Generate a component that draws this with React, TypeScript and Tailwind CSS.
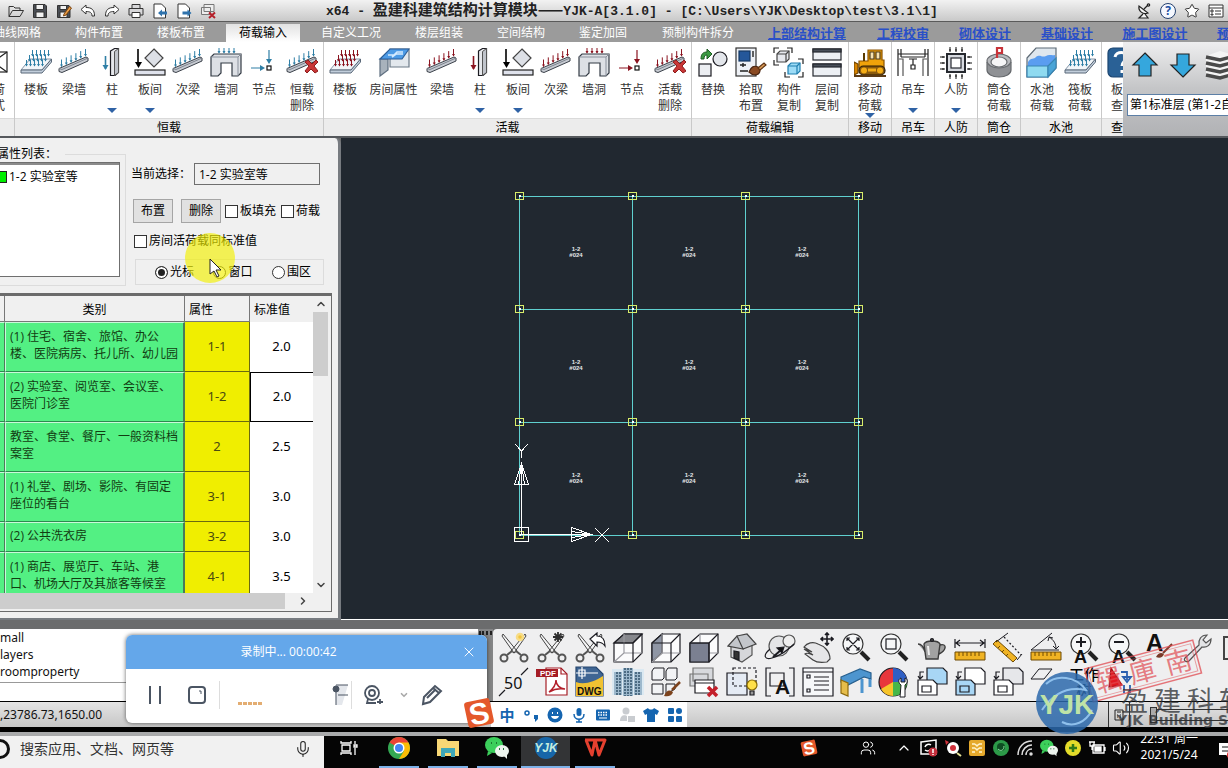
import { useState } from "react";
import type { ReactNode } from "react";
import { ChevronDown, ChevronRight, ChevronUp, Mic, Star, Volume2, Users, X } from "lucide-react";

const TEAL = "#2f7fa6";
const DARK_RED = "#8b1420";

/* ---------- shared drawing helpers ---------- */

function Svg({ children, size = "w-8 h-8" }: { children: ReactNode; size?: string }) {
  return (
    <svg viewBox="0 0 32 32" className={`${size} shrink-0`} fill="none" stroke="#1c1c22" strokeWidth="1.2" aria-hidden="true">
      {children}
    </svg>
  );
}

function Arrow({ x, y, len = 8, color }: { x: number; y: number; len?: number; color: string }) {
  return (
    <>
      <path d={`M${x} ${y}v${len}`} stroke={color} strokeWidth="1" />
      <path d={`M${x - 1.5} ${y + len - 2}h3l-1.5 2.5z`} fill={color} stroke="none" />
    </>
  );
}

/* ---------- ribbon icons ---------- */

const SlabIcon = ({ color = TEAL }: { color?: string }) => (
  <Svg>
    <path d="M1 23 10 12h21.500L22 23z" fill="#f1f5f9" stroke="#8796a8" strokeWidth="1" />
    <path d="M1 23v3h21l9.500-11v-3L22 23z" fill="#c2cedb" stroke="#5a6878" strokeWidth="1" />
    {[0, 1, 2].map((r) =>
      [0, 1, 2, 3, 4].map((i) => <Arrow key={`${r}${i}`} x={6.5 + i * 4 + r * 3} y={13 - r * 5} len={6} color={color} />)
    )}
  </Svg>
);

const beamShape = (color: string) => (
  <>
    <path d="M1 21.500 28 10l2 1v3L4 25.500l-3-1z" fill="#c6cad1" stroke="#3c424b" strokeWidth="1" />
    <path d="M1 21.500l3 1L30 11" stroke="#7d848e" strokeWidth="1" />
    {[0, 1, 2, 3, 4, 5].map((i) => <Arrow key={i} x={3.5 + i * 4.8} y={12.5 - i * 2.1} len={7} color={color} />)}
  </>
);

const BeamIcon = ({ color = TEAL }: { color?: string }) => <Svg>{beamShape(color)}</Svg>;

const RedCross = () => (
  <path d="m19 15 3-2 4 4 4-4 2 2-4 4 4 5-3 2-4-4-4 4-2-2 4-5z" fill="#c83737" stroke="#8f1d1d" strokeWidth="1" />
);

const BeamDeleteIcon = ({ color = TEAL }: { color?: string }) => (
  <Svg>{beamShape(color)}<RedCross /></Svg>
);

const ColumnIcon = ({ color = TEAL }: { color?: string }) => (
  <Svg>
    <path d="M14.500 4l4-2.500h4v24l-3.500 3h-4.500z" fill="#e6e8ec" />
    <path d="M18.500 4.500l4-3v24l-4 3z" fill="#c0c4cb" stroke="#555" strokeWidth="1" />
    <path d="M9.500 9v13" stroke={color} strokeWidth="1.6" />
    <path d="M6.500 18h6l-3 5z" fill={color} stroke="none" />
  </Svg>
);

const PlateIcon = () => (
  <Svg>
    <path d="M4 2v14" stroke="#000" strokeWidth="1.6" />
    <path d="M1 15h7l-3.500 6z" fill="#000" stroke="none" />
    <path d="M20 2l9 9-9 9-9-9z" fill="#dde0e6" stroke="#444" />
    <rect x="1" y="23" width="30" height="5" fill="#dfe2ec" stroke="#222" />
  </Svg>
);

const WallHoleIcon = ({ color = TEAL }: { color?: string }) => (
  <Svg>
    <path d="M1 10l3-3h27v19l-3 3h-6V16H11v10l-3 3H1z" fill="#dde0e5" stroke="#333a44" />
    <path d="M1 10h27v19M28 10l3-3" stroke="#8a919c" strokeWidth="1" />
    {[0, 1, 2, 3].map((i) => <Arrow key={i} x={9 + i * 5} y={1} len={5} color={color} />)}
  </Svg>
);

const NodeIcon = ({ color = TEAL }: { color?: string }) => (
  <Svg>
    <path d="M21 3v12M3 21h11" stroke={color} />
    <path d="M18 12h6l-3 5zM12 18l5 3-5 3z" fill={color} stroke="none" />
    <rect x="19" y="19" width="4" height="4" stroke="#111" />
  </Svg>
);

const RoomPropIcon = () => (
  <Svg>
    <path d="M12 2h19v18H12z" fill="#e3e8ed" stroke="#6c7a88" />
    <path d="M2 12v17l8-6V12z" fill="#a8b2bc" stroke="#5f6f80" />
    <path d="M2 12 12 2h19l-7 10z" fill="#4d9be6" stroke="#2c5f99" />
    <path d="M10 8h6l3-3h6M14 10l4-3h7" stroke="#d5ebff" strokeWidth="1.6" />
  </Svg>
);

const ReplaceIcon = () => (
  <Svg>
    <rect x="2" y="17" width="12" height="12" fill="#eceef2" />
    <circle cx="23" cy="12" r="7" fill="#e3e6eb" />
    <path d="M4 12c0-5 2-7 6-7V2l5 5-5 5V8c-2 0-3 1-3 4z" fill="#3c9a42" stroke="#1e5c24" strokeWidth="1" />
  </Svg>
);

const PickIcon = () => (
  <Svg>
    <rect x="1" y="1" width="20" height="28" fill="#eef1f6" stroke="#333" />
    <rect x="4" y="4" width="11" height="10" fill="#24579a" stroke="#163863" />
    <path d="M18 4v6M5 18h6M8 16v4M5 24h8" stroke="#222" strokeWidth="1.4" />
    <path d="M14 25c2-5 5-7 9-5l2 3c0 5-6 7-11 2z" fill="#8a4a22" stroke="#4a2510" />
    <path d="M23 21l6-5 2 2-6 5z" fill="#d89a56" stroke="#5e3313" />
  </Svg>
);

const MemberCopyIcon = () => (
  <Svg>
    <path d="M1 6V1h5M14 1h5v5M1 13v5h5" stroke="#222" />
    <path d="M4 7l3-3h9v8l-3 3H4z" fill="#e7e9ee" stroke="#444" />
    <path d="M4 7h9v8M13 7l3-3" stroke="#444" />
    <path d="M12 25v5h5M25 30h5v-5M30 17v-5h-5" stroke="#222" />
    <path d="M15 19l3-3h9v8l-3 3h-9z" fill="#9ddcf7" stroke="#1f7fb0" />
    <path d="M15 19h9v8M24 19l3-3" stroke="#1f7fb0" />
  </Svg>
);

const FloorCopyIcon = () => (
  <Svg>
    <rect x="2" y="2" width="28" height="11" fill="#edf0f4" stroke="#26292f" />
    <rect x="2" y="2" width="28" height="3" fill="#4a505a" stroke="#26292f" />
    <rect x="2" y="17" width="28" height="12" fill="#edf0f4" stroke="#26292f" />
    <rect x="2" y="17" width="28" height="3" fill="#4a505a" stroke="#26292f" />
  </Svg>
);

const BulldozerIcon = () => (
  <Svg>
    <path d="M5 14h9V3h14v10h2v8H5z" fill="#f0a30a" stroke="#8a5300" />
    <path d="M16 5h4v7h-4zM22 5h4v7h-4z" fill="#f7e3b0" stroke="#4b3c22" />
    <path d="M0 15l4 2v9l-4 2z" fill="#d98500" stroke="#6f4300" />
    <rect x="5" y="19" width="26" height="9" rx="4.500" fill="#8a5a0c" stroke="#2a1c06" />
    <circle cx="10" cy="23.500" r="3" fill="#f4ad16" stroke="none" />
    <circle cx="26" cy="23.500" r="3" fill="#f4ad16" stroke="none" />
    <path d="M14 23h8" stroke="#f4ad16" strokeWidth="3" />
    <path d="M10 14V6" stroke="#5a3b00" strokeWidth="2" />
    <path d="M0 29h32" stroke="#5a3a14" strokeWidth="2" />
  </Svg>
);

const CraneIcon = () => (
  <Svg>
    <path d="M1 2v27M4 2v8M31 2v27M28 2v8M1 7h30M4 10h24" stroke="#222" />
    <path d="M2 12h4v17M30 12h-4v17" stroke="#555" />
    <path d="M12 12h8M16 12v6M14 18h4v4h-4z" stroke="#222" />
  </Svg>
);

const ShelterIcon = () => (
  <Svg>
    <rect x="7" y="7" width="18" height="18" fill="#d7dae0" stroke="#26292f" strokeWidth="2" />
    <rect x="11" y="11" width="10" height="10" fill="#fff" stroke="#26292f" />
    {[10, 16, 22].map((p) => (
      <g key={p} stroke="#111" strokeWidth="1">
        <path d={`M${p} 0v5M${p} 32v-5M0 ${p}h5M32 ${p}h-5`} />
        <path d={`M${p - 1} 3h2M${p - 1} 29h2M3 ${p - 1}v2M29 ${p - 1}v2`} />
      </g>
    ))}
  </Svg>
);

const SiloIcon = () => (
  <Svg>
    <path d="M4 15v8c0 4 5 7 12 7s12-3 12-7v-8" fill="#8f9195" stroke="#66696d" />
    <ellipse cx="16" cy="14" rx="12" ry="7" fill="#b9bbbf" stroke="#6a6d71" />
    <ellipse cx="16" cy="15" rx="8" ry="5" fill="#f6f6f7" stroke="#6a6d71" />
    <path d="M14 11V1h5v5h-5" stroke="#c8343a" strokeWidth="2.200" />
  </Svg>
);

const PoolIcon = () => (
  <Svg>
    <path d="M1 11l9-10h20v20l-8 9H1z" fill="#dfe7ee" stroke="#5d6a76" />
    <path d="M2 15c3-5 6-2 8-5 4-3 6 1 10-1 3-2 6 0 9-1v10l-7 9H2z" fill="#5a9df0" stroke="none" />
    <path d="M1 19h21v11H1z" fill="#8fdaf0" stroke="#3986b4" />
    <path d="M22 19l8-8v10l-8 9z" fill="#4aa4d6" stroke="#3986b4" />
  </Svg>
);

const HelpTileIcon = () => (
  <Svg>
    <rect x="1" y="1" width="30" height="29" rx="5" fill="#2a6196" stroke="#1b4570" />
    <path d="M8 10c1-6 12-6 12 0 0 4-5 4-5 9M15 23v3" stroke="#fff" strokeWidth="3" />
  </Svg>
);

const ModeIcon = () => (
  <Svg>
    <rect x="2" y="5" width="28" height="20" fill="#fff" stroke="#222" />
    <path d="M2 5l28 20M30 5 2 25" stroke="#222" />
  </Svg>
);

/* ---------- ribbon data ---------- */

interface Tool {
  label: string[];
  icon: ReactNode;
  menu?: boolean;
  wide?: boolean;
}

interface ToolGroup {
  title: string;
  tools: Tool[];
}

const GROUPS: ToolGroup[] = [
  { title: "", tools: [{ label: ["显荷", "模式"], icon: <ModeIcon /> }] },
  {
    title: "恒载",
    tools: [
      { label: ["楼板"], icon: <SlabIcon /> },
      { label: ["梁墙"], icon: <BeamIcon /> },
      { label: ["柱"], icon: <ColumnIcon />, menu: true },
      { label: ["板间"], icon: <PlateIcon />, menu: true },
      { label: ["次梁"], icon: <BeamIcon /> },
      { label: ["墙洞"], icon: <WallHoleIcon /> },
      { label: ["节点"], icon: <NodeIcon /> },
      { label: ["恒载", "删除"], icon: <BeamDeleteIcon /> },
    ],
  },
  {
    title: "活载",
    tools: [
      { label: ["楼板"], icon: <SlabIcon color={DARK_RED} /> },
      { label: ["房间属性"], icon: <RoomPropIcon />, wide: true },
      { label: ["梁墙"], icon: <BeamIcon color={DARK_RED} /> },
      { label: ["柱"], icon: <ColumnIcon color={DARK_RED} />, menu: true },
      { label: ["板间"], icon: <PlateIcon />, menu: true },
      { label: ["次梁"], icon: <BeamIcon color={DARK_RED} /> },
      { label: ["墙洞"], icon: <WallHoleIcon color={DARK_RED} /> },
      { label: ["节点"], icon: <NodeIcon color={DARK_RED} /> },
      { label: ["活载", "删除"], icon: <BeamDeleteIcon color={DARK_RED} /> },
    ],
  },
  {
    title: "荷载编辑",
    tools: [
      { label: ["替换"], icon: <ReplaceIcon /> },
      { label: ["拾取", "布置"], icon: <PickIcon /> },
      { label: ["构件", "复制"], icon: <MemberCopyIcon /> },
      { label: ["层间", "复制"], icon: <FloorCopyIcon /> },
    ],
  },
  { title: "移动", tools: [{ label: ["移动", "荷载"], icon: <BulldozerIcon />, menu: true }] },
  { title: "吊车", tools: [{ label: ["吊车"], icon: <CraneIcon />, menu: true }] },
  { title: "人防", tools: [{ label: ["人防"], icon: <ShelterIcon />, menu: true }] },
  { title: "筒仓", tools: [{ label: ["筒仓", "荷载"], icon: <SiloIcon /> }] },
  {
    title: "水池",
    tools: [
      { label: ["水池", "荷载"], icon: <PoolIcon /> },
      { label: ["筏板", "荷载"], icon: <SlabIcon /> },
    ],
  },
  { title: "查询", tools: [{ label: ["板荷", "查询"], icon: <HelpTileIcon /> }] },
];

const TABS = [
  { name: "轴线网格", width: "w-[82px]" },
  { name: "构件布置", width: "w-[82px]" },
  { name: "楼板布置", width: "w-[82px]" },
  { name: "荷载输入", width: "w-[82px]" },
  { name: "自定义工况", width: "w-[94px]" },
  { name: "楼层组装", width: "w-[82px]" },
  { name: "空间结构", width: "w-[82px]" },
  { name: "鉴定加固", width: "w-[82px]" },
  { name: "预制构件拆分", width: "w-[108px]" },
];

const MODULE_LINKS = [
  { name: "上部结构计算", width: "w-[110px]" },
  { name: "工程校审", width: "w-[82px]" },
  { name: "砌体设计", width: "w-[82px]" },
  { name: "基础设计", width: "w-[82px]" },
  { name: "施工图设计", width: "w-[94px]" },
  { name: "预制设计", width: "w-[82px]" },
];

/* ---------- title bar ---------- */

const QUICK: { name: string; icon: ReactNode }[] = [
  { name: "打开", icon: <path d="M2 27V7h9l3 3h10v5M2 27l7-12h22l-7 12z" /> },
  { name: "保存", icon: <><path d="M3 3h23l3 3v23H3z" fill="#4a4e55" /><path d="M8 3h15v10H8zM8 18h16v11H8z" fill="#f2f2f2" /></> },
  { name: "另存为", icon: <><path d="M3 5h23l2 3v21H3z" fill="#4a4e55" /><path d="M8 5h13v8H8zM8 18h14v11H8z" fill="#f2f2f2" /><path d="m16 22 11-15 4 3-11 14-5 2z" fill="#eba04a" stroke="#7c430d" /></> },
  { name: "撤销", icon: <path d="M2 13 12 4v5c11 0 17 4 17 17h-5c0-7-4-9-12-9v5z" fill="#fff" /> },
  { name: "重做", icon: <path d="M30 13 20 4v5C9 9 3 13 3 26h5c0-7 4-9 12-9v5z" fill="#fff" /> },
  { name: "打印", icon: <><path d="M8 11V3h16v8M2 11h28v13H2z" fill="#d8d8da" /><path d="M8 19h16v10H8z" fill="#fff" /></> },
  { name: "导入", icon: <><path d="M4 2h15l8 8v20H4z" fill="#fff" /><path d="m12 20 8-7v4h10v6H20v4z" fill="#2f73ad" stroke="none" /></> },
  { name: "导出", icon: <><path d="M4 2h15l8 8v20H4z" fill="#fff" /><path d="m31 20-8-7v4H13v6h10v4z" fill="#2f73ad" stroke="none" /></> },
  { name: "关闭", icon: <><path d="M8 3h20v14H8zM3 9h18v14H3z" fill="#eee" stroke="#777" /><path d="m18 19 12 11M30 19 18 30" stroke="#b5202a" strokeWidth="4" /></> },
];

function TitleBar() {
  return (
    <header className="flex h-[22px] shrink-0 items-center border-b border-[#5a5a5a] bg-linear-to-b from-[#f2f2f2] to-[#c9c9c9] pl-1">
      <div className="flex w-[322px] shrink-0">
        {QUICK.map((q) => (
          <button key={q.name} aria-label={q.name} className="flex w-6 items-center justify-center">
            <svg viewBox="0 0 32 32" className="h-4 w-4" fill="none" stroke="#333" strokeWidth="2">{q.icon}</svg>
          </button>
        ))}
      </div>
      <h1 className="flex-1 whitespace-nowrap font-['Liberation_Mono','Noto_Sans_CJK_SC',monospace] text-[13px] font-bold leading-5 text-[#222]">
        x64 - <span className="font-['Noto_Sans_CJK_SC',sans-serif] text-[15px] leading-5">盈建科建筑结构计算模块——</span>YJK-A[3.1.0] - [C:\Users\YJK\Desktop\test\3.1\1]
      </h1>
      <div className="flex shrink-0 gap-2 pr-1">
        <button aria-label="通讯">
          <svg viewBox="0 0 16 16" className="h-4 w-4" fill="none" stroke="#222" strokeWidth="1.200">
            <path d="M3 3c-1 5 4 9 9 7zM8 6l4-4M13 1.500v0M7 11l-4 4h9l-3-4" fill="#f5f5f5" /><circle cx="12.500" cy="2" r="1.200" />
          </svg>
        </button>
        <button aria-label="帮助" className="flex h-4 w-4 items-center justify-center rounded-full border border-[#24406e] bg-[#f5f8ff] text-xs font-bold text-[#1d4fa3]">?</button>
        <button aria-label="收藏"><Star className="h-4 w-4 fill-white text-[#333]" strokeWidth={1.5} /></button>
        <button aria-label="面板">
          <svg viewBox="0 0 16 16" className="h-4 w-4" fill="#fff" stroke="#333">
            <path d="M1 2h14v12H1zM1 5h14" /><path d="M3 7h2v2H3zM3 11h2v1H3zM7 8h6M7 11h6" />
          </svg>
        </button>
      </div>
    </header>
  );
}

/* ---------- ribbon ---------- */

function RibbonTool({ tool }: { tool: Tool }) {
  return (
    <button className={`flex shrink-0 flex-col items-center text-xs leading-4 text-[#333] ${tool.wide ? "w-[59px]" : "w-[38px]"}`}>
      {tool.icon}
      <span className="mt-[3px] whitespace-nowrap">{tool.label[0]}</span>
      {tool.label[1] && <span className="whitespace-nowrap">{tool.label[1]}</span>}
      {tool.menu && (
        <svg viewBox="0 0 10 5" className={tool.label[1] ? "-mt-px h-[5px] w-[10px] shrink-0" : "mt-[10px] h-[5px] w-[10px] shrink-0"}>
          <path d="M0 0h10L5 5z" fill="#2f62a5" />
        </svg>
      )}
    </button>
  );
}

function Ribbon() {
  const [active, setActive] = useState("荷载输入");

  return (
    <>
      <nav className="flex h-5 shrink-0 items-end overflow-hidden bg-[#9b9b9b] text-xs">
        <div className="-ml-6 flex shrink-0 items-end">
          {TABS.map((t) => (
            <div key={t.name} className={`flex shrink-0 justify-center ${t.width}`}>
              <button
                onClick={() => setActive(t.name)}
                className={`h-[18px] whitespace-nowrap px-[13px] leading-[18px] ${
                  active === t.name ? "bg-linear-to-b from-[#e2e2e2] to-white text-black" : "text-white"
                }`}
              >
                {t.name}
              </button>
            </div>
          ))}
          {MODULE_LINKS.map((m) => (
            <div key={m.name} className={`flex shrink-0 justify-center ${m.width}`}>
              <a href="#" className="whitespace-nowrap text-[13px] font-bold leading-[18px] text-[#2a50c8] underline">{m.name}</a>
            </div>
          ))}
        </div>
      </nav>

      <div className="flex h-24 shrink-0 border-b-2 border-[#55585c] bg-white">
        <div className="flex min-w-0 flex-1 overflow-hidden">
          <div className="-ml-[28px] flex shrink-0">
            {GROUPS.map((g, i) => (
              <section key={i} className="flex shrink-0 flex-col border-r border-[#c9c9c9]">
                <div className="flex h-[76px] shrink-0 px-[2px] pt-[5px]">
                  {g.tools.map((t, k) => <RibbonTool key={k} tool={t} />)}
                </div>
                <h2 className="flex-1 border-t border-[#dadada] bg-[#ececec] text-center text-xs leading-[18px] text-black">{g.title}</h2>
              </section>
            ))}
          </div>
        </div>
        <div className="flex w-[105px] shrink-0 flex-col overflow-hidden bg-linear-to-b from-[#eeeeef] via-[#c4c5c7] to-[#b1b2b5] pl-1">
          <div className="flex h-[52px] shrink-0 items-center gap-[6px] pt-[-2px] pb-[6px] pl-[2px]">
            <button aria-label="上一层" className="shrink-0">
              <Svg><path d="m16 4 12 12h-6v11H10V16H4z" fill="#35a7dd" stroke="#222" /></Svg>
            </button>
            <button aria-label="下一层" className="shrink-0">
              <Svg><path d="m16 28 12-12h-6V5H10v11H4z" fill="#35a7dd" stroke="#222" /></Svg>
            </button>
            <button aria-label="全楼" className="shrink-0">
              <Svg>
                <path d="m1 7 14-5 14 4v22l-14 2-14-3z" fill="#f4f4f4" stroke="none" />
                <path d="m1 8 14 3 14-4M1 14l14 3 14-4M1 20l14 3 14-4M1 26l14 3 14-4" stroke="#4a4a4a" strokeWidth="3.500" />
              </Svg>
            </button>
          </div>
          <select aria-label="标准层" className="h-[22px] w-[170px] shrink-0 appearance-none border border-[#5c7fa6] bg-white px-[2px] text-xs text-black">
            <option>第1标准层 (第1-2自然层)</option>
          </select>
        </div>
      </div>
    </>
  );
}

/* ---------- property panel ---------- */

const ROWS = [
  { text: "(1) 住宅、宿舍、旅馆、办公\n楼、医院病房、托儿所、幼儿园", code: "1-1", value: "2.0" },
  { text: "(2) 实验室、阅览室、会议室、\n医院门诊室", code: "1-2", value: "2.0", selected: true },
  { text: "教室、食堂、餐厅、一般资料档\n案室", code: "2", value: "2.5" },
  { text: "(1) 礼堂、剧场、影院、有固定\n座位的看台", code: "3-1", value: "3.0" },
  { text: "(2) 公共洗衣房", code: "3-2", value: "3.0", short: true },
  { text: "(1) 商店、展览厅、车站、港\n口、机场大厅及其旅客等候室", code: "4-1", value: "3.5" },
];

const CHECK = "h-[13px] w-[13px] shrink-0 appearance-none border border-[#333] bg-white checked:bg-[#333]";
const RADIO =
  "h-[13px] w-[13px] shrink-0 appearance-none rounded-full border border-[#333] bg-white checked:bg-[#222] checked:shadow-[inset_0_0_0_2px_#fff]";

function PropertyPanel() {
  const [mode, setMode] = useState("光标");

  return (
    <aside className="relative flex w-[341px] shrink-0 flex-col rounded-tr-md border-r-[3px] border-b-2 border-[#777b80] bg-[#f0f0f0] text-xs text-black">
      <div className="flex h-[155px] shrink-0">
        <fieldset className="mt-2 mb-[7px] w-[126px] shrink-0 border border-l-0 border-[#dcdcdc] pr-[5px]">
          <legend className="-ml-[3px] pr-2 leading-4">属性列表：</legend>
          <div className="h-[115px] border border-l-0 border-[#6f6f6f] bg-white pt-[5px] shadow-[inset_0_2px_0_#8b8b8b]">
            <div className="flex items-center gap-[2px]">
              <span className="h-3 w-[7px] border border-l-0 border-[#222] bg-[#00ee00]" />
              <span className="leading-[18px]">1-2 实验室等</span>
            </div>
          </div>
        </fieldset>
        <div className="flex flex-1 flex-col pl-[5px]">
          <label className="mt-[25px] flex h-[22px] items-center gap-1">
            <span className="w-[59px] whitespace-nowrap">当前选择：</span>
            <input readOnly value="1-2 实验室等" className="h-[22px] w-[126px] border border-[#6f6f6f] bg-[#f0f0f0] px-1 text-xs" />
          </label>
          <div className="mt-[14px] flex h-6 items-center pl-[2px]">
            <button className="h-6 w-10 border border-[#a5a5a5] bg-[#e1e1e1]">布置</button>
            <button className="ml-2 h-6 w-10 border border-[#a5a5a5] bg-[#e1e1e1]">删除</button>
            <label className="ml-1 flex items-center gap-[2px]"><input type="checkbox" className={CHECK} />板填充</label>
            <label className="ml-[5px] flex items-center gap-[2px]"><input type="checkbox" className={CHECK} />荷载</label>
          </div>
          <label className="mt-2 flex h-5 items-center gap-[2px] pl-[3px]">
            <input type="checkbox" className={CHECK} />房间活荷载同标准值
          </label>
          <div className="mt-2 ml-1 flex h-[26px] w-[189px] items-center justify-between border border-[#dcdcdc] pr-3 pl-[19px]">
            {["光标", "窗口", "围区"].map((m) => (
              <label key={m} className="flex items-center gap-[2px]">
                <input type="radio" name="pick" checked={mode === m} onChange={() => setMode(m)} className={RADIO} />
                {m}
              </label>
            ))}
          </div>
        </div>
      </div>

      <div className="mr-[6px] mb-[6px] flex min-h-0 flex-1 flex-col border-t-[3px] border-r border-b border-[#6b6b6b] pr-[3px] pb-[2px]">
        <div className="flex min-h-0 flex-1">
          <div className="min-w-0 flex-1 overflow-hidden bg-white">
            <table className="w-[313px] table-fixed border-separate border-spacing-0">
              <colgroup>
                <col className="w-[5px]" />
                <col className="w-[180px]" />
                <col className="w-[65px]" />
                <col className="w-[63px]" />
              </colgroup>
              <thead>
                <tr className="h-[26px] bg-[#f0f0f0]">
                  <th className="border-r border-b border-[#777]" />
                  <th className="border-r border-b border-[#777] pt-[2px] font-normal">类别</th>
                  <th className="border-r border-b border-[#777] pt-[2px] pl-1 text-left font-normal">属性</th>
                  <th className="pt-[2px] pl-1 text-left font-normal">标准值</th>
                </tr>
              </thead>
              <tbody>
                {ROWS.map((r) => (
                  <tr key={r.code} className={r.short ? "h-[30px]" : "h-[50px]"}>
                    <td className="border-t border-r border-b border-t-[#c9f9d9] border-r-[#4b7a5a] border-b-[#2c8a50] bg-[#53f083]" />
                    <td className="border-t border-r-2 border-b border-l border-t-[#c9f9d9] border-r-[#4b7a5a] border-b-[#2c8a50] border-l-[#c9f9d9] bg-[#53f083] pb-1 pl-1 align-middle leading-[17px] whitespace-pre text-[#123c12]">
                      {r.text}
                    </td>
                    <td className="border-r border-b border-[#6b6a10] bg-[#f0ee00] text-center font-['Noto_Sans',sans-serif] text-[13px] text-[#4a4a10]">{r.code}</td>
                    <td className={`text-center font-['Noto_Sans',sans-serif] text-[13px] ${r.selected ? "border-t border-b border-l border-black" : ""}`}>
                      {r.value}
                    </td>
                  </tr>
                ))}
              </tbody>
            </table>
          </div>
          <div className="flex w-[15px] shrink-0 flex-col items-center bg-[#f0f0f0]">
            <ChevronUp className="my-[2px] h-3 w-3 text-[#444]" strokeWidth={3} />
            <div className="h-16 w-full bg-[#cdcdcd]" />
            <ChevronDown className="mt-auto mb-[2px] h-3 w-3 text-[#444]" strokeWidth={3} />
          </div>
        </div>
        <div className="flex h-4 shrink-0 items-center bg-[#f0f0f0]">
          <div className="h-full w-[285px] bg-[#cdcdcd]" />
          <ChevronRight className="ml-3 h-3 w-3 text-[#444]" strokeWidth={3} />
        </div>
      </div>

      {/* highlighted mouse pointer */}
      <div className="pointer-events-none absolute top-[95px] left-[185px] h-[50px] w-[50px] rounded-full bg-[#f2f000]/65" />
      <svg viewBox="0 0 14 20" className="pointer-events-none absolute top-[120px] left-[209px] h-5 w-[14px]">
        <path d="M1 1v15l4-3 3 6 2-1-3-6h5z" fill="#fff" stroke="#222" />
      </svg>
    </aside>
  );
}

/* ---------- drawing canvas ---------- */

const GRID_X = [178, 291, 404, 517];
const GRID_Y = [58, 171, 284, 397];

function ModelCanvas() {
  return (
    <main className="min-w-0 flex-1 overflow-hidden border-b border-white bg-[#212830]">
      <svg className="h-full w-full" fill="none" shapeRendering="crispEdges">
        {GRID_X.map((x) => <path key={x} d={`M${x + 0.5} 58v340`} stroke="#5fd0cf" />)}
        {GRID_Y.map((y) => <path key={y} d={`M178 ${y + 0.5}h340`} stroke="#5fd0cf" />)}
        {GRID_X.map((x) =>
          GRID_Y.map((y) => (
            <g key={`${x}-${y}`}>
              <rect x={x - 3.5} y={y - 3.5} width="8" height="7" stroke="#d8ec6a" />
              <rect x={x} y={y - 1} width="2" height="2" fill="#fff" />
            </g>
          ))
        )}
        {GRID_X.slice(0, 3).map((x) =>
          GRID_Y.slice(0, 3).map((y) => (
            <g key={`t${x}-${y}`} fill="#e3e6ea" fontFamily="Liberation Sans" fontWeight="700" textAnchor="middle">
              <text x={x + 57} y={y + 55} fontSize="6">1-2</text>
              <text x={x + 57} y={y + 61} fontSize="6">#024</text>
            </g>
          ))
        )}
        {/* axis marker */}
        <g stroke="#fff">
          <path d="M180.500 397V326M180 396.500h70" />
          <rect x="173.500" y="389.500" width="14" height="14" />
          <path d="M180.500 326 173.500 346.500h14zM180.500 326l-3 20M180.500 326l3 20" />
          <path d="M250.500 396.500 230.500 389.500v14zM250.500 396.500l-20-3M250.500 396.500l-20 3" />
          <path d="M174 306l6.500 7 6.500-7M180.500 313v7M254 390l14 14M268 390l-14 14" />
        </g>
      </svg>
    </main>
  );
}

/* ---------- bottom tool palette ---------- */

const scissors = (
  <>
    <path d="M5 2 4 4l12 17 3-2zM27 2l1 2-12 17-3-2z" fill="#f4f4f5" stroke="#444" strokeWidth="1" />
    <circle cx="6" cy="26" r="3.500" stroke="#555" strokeWidth="2" />
    <circle cx="26" cy="26" r="3.500" stroke="#555" strokeWidth="2" />
    <path d="m9 23 5-4M23 23l-5-4" stroke="#555" strokeWidth="2" />
  </>
);

const Box = ({ face }: { face: "top" | "left" | "front" }) => (
  <Svg>
    <path d="M2 11 12 2h18v19L21 30H2z" fill="#fbfbfc" />
    {face === "top" && <path d="M2 11 12 2h18l-9 9z" fill="#86878c" />}
    {face === "left" && <path d="M2 11 12 2v19L2 30z" fill="#8f96a5" />}
    <path d="M12 2v19L2 30M12 21h18" stroke="#9a9aa0" />
    {face === "front" && <path d="M2 11h19v19H2z" fill="#7b8091" />}
    <path d="M2 11h19v19M21 11l9-9" />
  </Svg>
);

const lens = (
  <>
    <circle cx="13" cy="12" r="10" fill="#f6f7f8" stroke="#333" />
    <path d="m21 20 8 8" stroke="#222" strokeWidth="4" />
  </>
);

const ruler = <path d="M1 20h30v8H1zM5 20v4M9 20v4M13 20v4M17 20v4M21 20v4M25 20v4" fill="#f0b323" stroke="#6e4b04" strokeWidth="1" />;

const sheets = (back: string, front: string) => (
  <>
    <path d="M11 2h16l4 4v12H11z" fill={back} />
    <path d="M2 14h15l4 4v11H2z" fill={front} />
    <path d="M6 20h9v6H6zM4 12V6h4M2 10l2 3 3-3" />
  </>
);

const ROW_ONE: { name: string; icon: ReactNode }[] = [
  { name: "显示剪切", icon: <Svg>{scissors}<circle cx="22" cy="5" r="3" fill="#f2c53a" stroke="#f7dc86" strokeWidth="2.500" /></Svg> },
  { name: "隐藏剪切", icon: <Svg>{scissors}<path d="M22 0v10M17 5h10M18.500 1.500l7 7M25.500 1.500l-7 7" stroke="#2d2d2d" strokeWidth="1.800" /></Svg> },
  { name: "恢复剪切", icon: <Svg>{scissors}<path d="m16 7 7-6v3c5 0 8 3 8 10-2-3-4-4-8-4v4z" fill="#fff" /></Svg> },
  { name: "俯视图", icon: <Box face="top" /> },
  { name: "左视图", icon: <Box face="left" /> },
  { name: "前视图", icon: <Box face="front" /> },
  { name: "轴测图", icon: <Svg><path d="M5 15v10l11 5 10-7V12" fill="#d6d7da" stroke="#555" /><path d="M2 14 11 4l6 13zM11 4l10-2 9 10-13 5z" fill="#c3c6cb" stroke="#444" /><path d="M8 19v7l5 2v-8z" fill="#333" /></Svg> },
  { name: "旋转", icon: <Svg><circle cx="15" cy="14" r="10" fill="#e4e5e7" stroke="#555" /><circle cx="25" cy="9" r="6" fill="#eee" stroke="#555" /><path d="M6 17C-2 24 1 28 8 26s16-8 22-14" /><path d="m9 25 8-7" strokeWidth="2" /><path d="m20 15-7 1 5 5z" fill="#111" /></Svg> },
  { name: "平移", icon: <Svg><path d="M2 15c3-4 9-6 14-3 6 2 12 7 12 15l-3 3c-6 1-10 1-14-2l-8-6c2-2 5 0 8 1l-9-6 8 3z" fill="#e6e6e8" stroke="#444" /><path d="M25 1v12M19 7h12M23 3l2-2 2 2M23 11l2 2 2-2M21 5l-2 2 2 2M29 5l2 2-2 2" strokeWidth="1.6" /></Svg> },
  { name: "全屏", icon: <Svg>{lens}<path d="m7 6 12 12M19 6 7 18M7 9V6h3M16 6h3v3M19 15v3h-3M10 18H7v-3" /></Svg> },
  { name: "窗口放大", icon: <Svg>{lens}<rect x="8" y="7" width="10" height="10" /></Svg> },
  { name: "渲染", icon: <Svg><path d="M2 12c4 0 6 4 7 8M8 12c2-4 14-4 16 0l-2 15H10zM24 13c7-2 7 5-1 9" fill="#a2a2a2" stroke="#3c3c3c" strokeWidth="1.400" /><path d="M12 14l1 9" stroke="#eee" strokeWidth="2" /><circle cx="16" cy="8" r="1.500" fill="#444" /></Svg> },
  { name: "量距离", icon: <Svg>{ruler}<path d="M1 7v9M31 7v9M2 11h28M6 8l-4 3 4 3M26 8l4 3-4 3" /></Svg> },
  { name: "量斜距", icon: <Svg><path d="m1 12 4-4 20 18-4 4zM6 16l2-2M10 20l2-2M14 24l2-2" fill="#f0b323" stroke="#6e4b04" strokeWidth="1" /><path d="M4 10 16 1M25 28l5-6" strokeWidth="1" /><path d="m12 5 17 18" strokeDasharray="2 2" /></Svg> },
  { name: "量角度", icon: <Svg>{ruler}<path d="M1 18h28M1 18 22 1M19 5c5 3 7 7 7 12M18 9l1-4 4 1M23 14l3 3 3-3" strokeWidth="1" /></Svg> },
  { name: "字放大", icon: <Svg>{lens}<path d="M8 10h10M13 5v10" strokeWidth="2" /><text x="6" y="31" fontSize="18" fontWeight="700" fontFamily="Liberation Sans" fill="#111" stroke="none">A</text></Svg> },
  { name: "字缩小", icon: <Svg>{lens}<path d="M8 10h10" strokeWidth="2" /><text x="6" y="31" fontSize="18" fontWeight="700" fontFamily="Liberation Sans" fill="#111" stroke="none">A</text></Svg> },
  { name: "字体", icon: <Svg><text x="2" y="19" fontSize="24" fontWeight="700" fontFamily="Liberation Sans" fill="#111" stroke="none">A</text><path d="m19 21 9-9" stroke="#7a3a2a" strokeWidth="2" /><path d="M12 25c2-4 5-5 8-3-1 3-4 5-8 3z" fill="#7a3a2a" stroke="none" /></Svg> },
  { name: "设置", icon: <Svg><path d="m3 26 14-13c-1-5 2-10 8-10l-4 5 3 3 5-4c0 6-4 9-9 8L7 29c-3 2-6-1-4-3z" fill="#e3e4e6" stroke="#555" /></Svg> },
  { name: "剪贴板", icon: <Svg><path d="M4 5h24v22H4zM10 2h8v5h-8z" fill="#eee" stroke="#444" strokeWidth="2" /></Svg> },
];

const ROW_TWO: { name: string; icon: ReactNode }[] = [
  { name: "比例", icon: <Svg><path d="m1 30 6-6M23 9l7-7" /><text x="6" y="23" fontSize="16" fontFamily="Noto Sans" fill="#111" stroke="none">50</text></Svg> },
  { name: "PDF", icon: <Svg><path d="M10 2h15l6 6v21H10z" fill="#fff" stroke="#a51d26" /><path d="M25 2v6h6" stroke="#a51d26" /><path d="M0 3h22v8H0z" fill="#a51d26" stroke="none" /><text x="4" y="10" fontSize="8" fontWeight="700" fontFamily="Liberation Sans" fill="#fff" stroke="none">PDF</text><path d="M13 26c5-4 7-8 7-12 0 5 4 9 9 9-6-1-11 0-16 3z" stroke="#b3202b" strokeWidth="1.5" /></Svg> },
  { name: "DWG", icon: <Svg><path d="M2 1h20l7 7v22H2z" fill="#3f6593" stroke="#27466e" /><path d="M2 16c8 3 18 0 27-6v20H2z" fill="#f1c232" stroke="none" /><path d="M2 7h22M8 1v12M5 4h6v6H5z" stroke="#fff" /><text x="3" y="29" fontSize="10" fontWeight="700" fontFamily="Liberation Sans" fill="#111" stroke="none">DWG</text></Svg> },
  { name: "三维模型", icon: <Svg><path d="M0 3h32v26H0z" fill="#dbe9f2" stroke="none" /><path d="M2 6h8v23H2zM11 2h10v28H11zM22 6h8v23h-8z" fill="#9db8cc" stroke="none" /><path d="M5 6v23M8 6v23M13 2v28M16 2v28M19 2v28M24 6v23M27 6v23" stroke="#33536b" strokeWidth="1.5" strokeDasharray="2 1" /></Svg> },
  { name: "构件刷", icon: <Svg><path d="M2 5l2-3h10v10l-2 2H2zM16 5l2-3h9v10l-2 2h-9zM2 18h11v10H2zM16 18h9v5l-9 5z" fill="#f2f3f5" strokeWidth="1" /><path d="m22 24 8-8" stroke="#7d431d" strokeWidth="2.500" /><path d="M14 30c2-5 5-7 9-4-1 4-5 5-9 4z" fill="#7d431d" stroke="none" /></Svg> },
  { name: "关闭窗口", icon: <Svg><path d="M5 2h20v13H5zM2 8h18v12H2z" fill="#d7d9dd" stroke="#777" /><path d="M7 14h19v13H7zM7 17h19" fill="#fff" /><path d="m20 21 9 9M29 21l-9 9" stroke="#c4202b" strokeWidth="3.500" /></Svg> },
  { name: "图层开关", icon: <Svg><path d="M1 7h20v22H1z" fill="#e5ebf4" /><path d="M7 2h23v18H7z" strokeDasharray="3 2" /><circle cx="26" cy="19" r="5" fill="#ffe04a" stroke="#8a6b00" /><path d="M24 25h4v4h-4z" fill="#999" /></Svg> },
  { name: "文字范围", icon: <Svg><path d="M7 2H2v28h5M25 2h5v28h-5M6 7h14v13H6z" /><text x="11" y="28" fontSize="21" fontWeight="700" fontFamily="Liberation Sans" fill="#111" stroke="none">A</text></Svg> },
  { name: "列表", icon: <Svg><path d="M1 2h30v28H1z" fill="#f6f7f9" /><path d="M1 6h30M5 9h3v3H5zM5 23h3v3H5zM12 11h15M12 24h15M12 15h15M12 19h15" /></Svg> },
  { name: "梁柱", icon: <Svg><path d="M1 11 20 3l11 4v6l-7-2-16 8-7-3z" fill="#4d95cf" stroke="#27608f" /><path d="M1 14l7 3v13l-7-3z" fill="#e6bd4a" stroke="#8d6a0e" /><path d="M22 13v14M30 13v8" stroke="#4d95cf" strokeWidth="3" /></Svg> },
  { name: "颜色设置", icon: <Svg><circle cx="15" cy="16" r="14" fill="#e8363c" /><path d="M15 16V2a14 14 0 0 1 14 14z" fill="#2f5fc4" stroke="none" /><path d="M15 16h14a14 14 0 0 1-14 14z" fill="#46b749" stroke="none" /><path d="M15 16v14A14 14 0 0 1 3 23z" fill="#f7c52b" stroke="none" /><path d="m22 31 1-12c-3-2-3-6 0-7v4h4v-4c3 1 3 5 0 7v12z" fill="#fff" strokeWidth="1" /></Svg> },
  { name: "复制图层", icon: <Svg>{sheets("#a8d6f5", "#fff")}</Svg> },
  { name: "粘贴图层", icon: <Svg>{sheets("#fff", "#a8d6f5")}</Svg> },
  { name: "移动图层", icon: <Svg>{sheets("#e6e7ea", "#fff")}</Svg> },
  { name: "平面", icon: <Svg><path d="M1 13 9 3h13l-8 10z" strokeWidth="1" /></Svg> },
];

function Palette() {
  return (
    <div className="min-w-0 flex-1 overflow-hidden rounded-tl bg-[#efeff0] pt-[2px] pl-[2px]">
      <div className="flex h-[34px] items-center">
        {ROW_ONE.map((t) => (
          <button key={t.name} aria-label={t.name} className="flex w-[38px] shrink-0 justify-center">{t.icon}</button>
        ))}
      </div>
      <div className="flex h-[34px] items-center">
        {ROW_TWO.map((t) => (
          <button key={t.name} aria-label={t.name} className="flex w-[38px] shrink-0 justify-center">{t.icon}</button>
        ))}
        <button className="w-[38px] shrink-0 text-[15px] leading-[15px] font-medium text-black">工作树</button>
        <button aria-label="楼层提示" className="flex w-[38px] shrink-0 justify-center">
          <Svg><path d="m5 2 11 17-13 2z" fill="#e01a22" stroke="#a60d14" /><path d="M15 6h6v8M17 11l4 5 4-5zM18 19v8M24 19v8" stroke="#2a5fae" strokeWidth="1.800" /></Svg>
        </button>
      </div>
    </div>
  );
}

/* ---------- screen recorder and input method bar ---------- */

function Recorder() {
  return (
    <div className="absolute top-[15px] left-[126px] h-[88px] w-[361px] overflow-hidden rounded-md bg-white shadow-[0_0_4px_rgba(0,0,0,0.6)]">
      <div className="relative flex h-[34px] items-center bg-[#64a7ea] text-white">
        <span className="flex-1 pr-9 text-center text-xs">录制中... 00:00:42</span>
        <button aria-label="关闭录制" className="absolute right-[10px]"><X className="h-4 w-4" strokeWidth={1.4} /></button>
      </div>
      <div className="flex h-[52px] items-center text-[#4b5563]">
        <button aria-label="暂停" className="ml-[23px] flex h-[18px] w-3 justify-between">
          <span className="h-full w-[2px] bg-[#4b5563]" />
          <span className="h-full w-[2px] bg-[#4b5563]" />
        </button>
        <button aria-label="停止" className="ml-[27px]">
          <svg viewBox="0 0 18 18" className="h-[18px] w-[18px]" fill="none" stroke="#4b5563" strokeWidth="2">
            <rect x="1" y="1" width="16" height="16" rx="3" /><path d="M11 5h2v3" strokeWidth="1" />
          </svg>
        </button>
        <div className="ml-[13px] h-7 w-px bg-[#ddd]" />
        <div className="mt-4 ml-[18px] flex gap-px">
          {[0, 1, 2, 3, 4].map((i) => <span key={i} className="h-[3px] w-1 bg-[#e3ad72]" />)}
        </div>
        <button aria-label="音量" className="ml-[70px]">
          <svg viewBox="0 0 16 24" className="h-6 w-4" fill="#e4e7ec" stroke="#4b5563">
            <path d="M3 2h13L10 22H4z" stroke="none" /><path d="M4 2h12M4 5v17M6 12h10" /><circle cx="4" cy="6" r="3" fill="#4b5563" />
          </svg>
        </button>
        <div className="ml-[3px] h-7 w-px bg-[#ddd]" />
        <button aria-label="摄像头" className="ml-3">
          <svg viewBox="0 0 20 20" className="h-5 w-5" fill="none" stroke="#4b5563" strokeWidth="1.800">
            <circle cx="8" cy="8" r="7" /><circle cx="8" cy="8" r="3" /><path d="M4 14l-1 4h9M16 14v5M13 17h6" />
          </svg>
        </button>
        <ChevronDown className="ml-[15px] h-[10px] w-[10px] text-[#aaa]" strokeWidth={4} />
        <button aria-label="画笔" className="ml-3">
          <svg viewBox="0 0 22 22" className="h-[22px] w-[22px]" fill="none" stroke="#4b5563" strokeWidth="2">
            <path d="m2 20 1-7L14 2l6 5L9 18zM6 14l9-9M12 4l6 5" />
          </svg>
        </button>
      </div>
    </div>
  );
}

function SogouLogo({ size }: { size: string }) {
  return (
    <svg viewBox="0 0 32 32" className={`${size} shrink-0`}>
      <g transform="rotate(-12 16 16)">
        <rect x="3" y="3" width="26" height="26" rx="3" fill="#e4582b" />
        <text x="16" y="27" textAnchor="middle" fontSize="30" fontWeight="700" fontFamily="Liberation Sans" fill="#fff">S</text>
      </g>
    </svg>
  );
}

const IME_ICONS: { name: string; icon: ReactNode }[] = [
  { name: "标点", icon: <><circle cx="4" cy="6" r="2" stroke="#1565b0" fill="none" strokeWidth="1.5" /><path d="M11 8h4v4l-3 3v-3h-1z" /></> },
  { name: "表情", icon: <><circle cx="8" cy="8" r="7.500" /><path d="M4 9h8c-1 4-7 4-8 0zM5 5h1v2H5zM10 5h1v2h-1z" fill="#fff" /></> },
  { name: "语音", icon: <><rect x="5.500" y="1" width="5" height="8" rx="2.500" /><path d="M3 7c0 7 10 7 10 0M8 12v3M5 15h6" fill="none" stroke="#1565b0" strokeWidth="1.500" /></> },
  { name: "键盘", icon: <><rect x="1" y="2.500" width="14" height="11" rx="1" /><path d="M3 5.500h10M3 8h10" stroke="#fff" strokeWidth="1.500" strokeDasharray="1.500 1" /><path d="M4 11h8" stroke="#fff" /></> },
  { name: "账号", icon: <g fill="#c9ccd0"><circle cx="7" cy="4" r="3.500" /><path d="M1 14c0-7 6-6 7-5v5zM9 9h7v6H9z" /></g> },
  { name: "皮肤", icon: <path d="M5 1c1 2 5 2 6 0l5 3-2 4-2-1v8H4V7L2 8 0 4z" /> },
  { name: "工具箱", icon: <><rect x="1" y="1" width="6" height="6" rx="1" /><rect x="9" y="1" width="6" height="6" rx="3" /><rect x="1" y="9" width="6" height="6" rx="1" /><rect x="9" y="9" width="6" height="6" rx="1" /></> },
];

function ImeBar() {
  return (
    <div className="absolute top-[82px] left-[463px] flex h-[25px] items-center">
      <div className="relative z-10"><SogouLogo size="-mt-1 h-8 w-8" /></div>
      <div className="-ml-1 flex h-full items-center gap-2 bg-white pr-1 pl-2">
        <button className="w-4 text-[15px] leading-5 font-bold text-[#1565b0]">中</button>
        {IME_ICONS.map((i) => (
          <button key={i.name} aria-label={i.name}>
            <svg viewBox="0 0 16 16" className="h-4 w-4" fill="#1565b0">{i.icon}</svg>
          </button>
        ))}
      </div>
    </div>
  );
}

function Watermark() {
  return (
    <svg viewBox="0 0 200 108" className="pointer-events-none absolute top-2 right-0 h-[108px] w-[200px] overflow-hidden" aria-hidden="true">
      <g fill="#2c2f33" fillOpacity="0.75">
        <g fontSize="27" fontFamily="Noto Sans CJK SC">
          <text x="93" y="83">盈</text>
          <text x="126" y="83">建</text>
          <text x="159" y="83">科</text>
          <text x="191" y="83">软</text>
        </g>
        <text x="89" y="97" fontSize="14" fontWeight="700" fontFamily="DejaVu Sans">YJK Building S</text>
      </g>
      <g transform="rotate(-15 115 43)" stroke="#e04a50" fill="none">
        <rect x="59" y="26" width="112" height="34" strokeWidth="1.500" opacity="0.75" />
        <rect x="62" y="29" width="106" height="28" strokeWidth="1" opacity="0.5" />
        <g fontSize="27" fontFamily="Noto Sans CJK SC" fill="#e04a50" fillOpacity="0.7" stroke="none">
          <text x="66" y="53">辑</text>
          <text x="101" y="53">庫</text>
          <text x="138" y="53">南</text>
        </g>
      </g>
      <circle cx="39" cy="75" r="31" fill="#2c68ab" fillOpacity="0.85" />
      <path d="M18 56c10-10 30-8 40 6-18-4-32 2-44 20M34 94c12 6 24 0 30-12" stroke="#8fc0ec" strokeWidth="2" fill="none" />
      <text x="39" y="86" textAnchor="middle" fontSize="28" fontWeight="700" fontFamily="Liberation Sans" fill="#bfe3a6">YJK</text>
    </svg>
  );
}

function BottomArea() {
  return (
    <div className="relative shrink-0 bg-[#6b6c6d] pt-[9px]">
      <div className="flex h-[72px]">
        <div className="flex w-[478px] shrink-0 flex-col overflow-hidden bg-white font-['Noto_Sans',sans-serif] text-xs text-[#111]">
          <pre className="h-[54px] border-b border-[#999] font-['Noto_Sans',sans-serif] leading-[17px]">{"mall\nlayers\nroomproperty"}</pre>
          <input aria-label="命令" className="min-h-0 flex-1 bg-white outline-none" />
        </div>
        <div className="flex w-[15px] shrink-0 justify-center bg-[#858687] pt-[2px]">
          <div className="h-1 w-[13px] border-y-2 border-dotted border-[#222]" />
        </div>
        <Palette />
      </div>
      <div className="flex h-[26px] items-center justify-between border-t border-black bg-linear-to-b from-[#e4e4e4] to-[#c6c6c6] font-['Noto_Sans',sans-serif] text-xs text-[#111]">
        <span className="whitespace-nowrap">,23786.73,1650.00</span>
        <div className="flex h-full w-[120px] items-center">
          <button aria-label="计算器" className="flex h-full w-[22px] items-center justify-center border-x border-[#333]">
            <svg viewBox="0 0 10 12" className="h-3 w-[10px]" fill="none" stroke="#222">
              <path d="M1 1h8v10H1zM3 3h4M3 6h1M6 6h1M3 8h1M6 8h1" />
            </svg>
          </button>
          <div className="ml-5 h-4 w-[7px] border border-[#333] bg-[#aaa]" />
          <div className="h-3 flex-1 border-y border-[#333]" />
        </div>
      </div>
      <div className="h-[5px] bg-black" />
      <div className="h-1 bg-[#a9aaab]" />
      <Recorder />
      <ImeBar />
    </div>
  );
}

/* ---------- taskbar ---------- */

const WeChat = ({ size }: { size: string }) => (
  <svg viewBox="0 0 24 24" className={size}>
    <ellipse cx="9" cy="9" rx="9" ry="8" fill="#3ccf5b" /><path d="m3 15-1 5 5-3z" fill="#3ccf5b" />
    <ellipse cx="17" cy="15" rx="7" ry="6" fill="#eef5ef" /><path d="m19 20 3 3v-5z" fill="#eef5ef" />
    <path d="M6 7h1M11 7h1M14 13h1M18 13h1" stroke="#1d7a32" strokeWidth="2" />
  </svg>
);

const APPS: { name: string; active?: boolean; icon: ReactNode }[] = [
  {
    name: "Chrome",
    icon: (
      <svg viewBox="0 0 24 24" className="h-6 w-6">
        <circle cx="12" cy="12" r="11" fill="#34a853" />
        <path d="M12 12 2.500 6.500A11 11 0 0 1 21.500 6.500z" fill="#ea4335" />
        <path d="M12 6.500h9.500A11 11 0 0 1 12 23l5-8z" fill="#fbbc05" />
        <circle cx="12" cy="12" r="5.500" fill="#fff" /><circle cx="12" cy="12" r="4" fill="#4285f4" />
      </svg>
    ),
  },
  {
    name: "文件资源管理器",
    icon: (
      <svg viewBox="0 0 24 24" className="h-6 w-6">
        <path d="M1 3h9l2 2h11v15H1z" fill="#f8d775" /><path d="M5 12h14v9h-4v-4H9v4H5z" fill="#3fa7b8" />
      </svg>
    ),
  },
  { name: "微信", icon: <WeChat size="h-6 w-6" /> },
  {
    name: "YJK",
    active: true,
    icon: (
      <svg viewBox="0 0 24 24" className="h-6 w-6 overflow-visible">
        <circle cx="12" cy="12" r="11" fill="#1766a8" />
        <text x="12" y="16" textAnchor="middle" fontSize="12" fontWeight="700" fontStyle="italic" fontFamily="Liberation Sans" fill="#c4ecdf">YJK</text>
      </svg>
    ),
  },
  {
    name: "WPS",
    icon: (
      <svg viewBox="0 0 24 24" className="h-6 w-6">
        <path d="M2 4h10L9 19 3 4M12 4h10l-6 15-4-15" fill="none" stroke="#e5402f" strokeWidth="3" strokeLinejoin="round" />
      </svg>
    ),
  },
];

const TRAY: { name: string; icon: ReactNode }[] = [
  { name: "更新", icon: <svg viewBox="0 0 18 18" className="h-[18px] w-[18px]" fill="none" stroke="#fff" strokeWidth="1.500"><path d="M1 3l15-2v14H1zM5 8a4 4 0 0 1 6-2M11 10a4 4 0 0 1-6 1" /><circle cx="13" cy="13" r="4.500" fill="#c5303d" stroke="none" /><path d="M13 10v4M13 15v1" /></svg> },
  { name: "录像", icon: <svg viewBox="0 0 18 18" className="h-[18px] w-[18px]"><circle cx="9" cy="9" r="6" fill="#fff" /><circle cx="9" cy="9" r="3" fill="#d1323c" /><path d="M1 1l4 2-3 3z" fill="#d1323c" /><path d="m13 14 4 3" stroke="#e8e59a" strokeWidth="2" /></svg> },
  { name: "压缩", icon: <svg viewBox="0 0 18 18" className="h-[18px] w-[18px]"><rect x="1" y="1" width="16" height="16" rx="2" fill="#e5a92c" /><path d="M4 5h3M11 5h3M4 9h3M11 9h3M4 13h3M11 13h3M7 5l2 2 2-2M7 9l2 2 2-2" stroke="#fff3cc" fill="none" strokeWidth="1.500" /></svg> },
  { name: "浏览器", icon: <svg viewBox="0 0 18 18" className="h-[18px] w-[18px]"><circle cx="9" cy="9" r="8" fill="#2c9a48" /><circle cx="9" cy="8" r="4" fill="#0e4d22" /><path d="M6 10c3 3 6 1 6-3" stroke="#8be0a0" fill="none" /></svg> },
  { name: "网络", icon: <svg viewBox="0 0 18 18" className="h-[18px] w-[18px]" fill="none" stroke="#ddd" strokeWidth="1.500"><path d="M2 16C2 8 8 2 16 2M6 16c0-5 4-10 10-10M10 16c0-3 2-6 6-6" /><circle cx="15" cy="15" r="1" fill="#fff" /></svg> },
  { name: "微信消息", icon: <WeChat size="h-[18px] w-[18px]" /> },
  { name: "安全卫士", icon: <svg viewBox="0 0 18 18" className="h-[18px] w-[18px]"><circle cx="9" cy="9" r="8" fill="#e3dc2a" /><path d="M9 5v8M5 9h8" stroke="#2f7a18" strokeWidth="2.500" /></svg> },
  { name: "电源", icon: <svg viewBox="0 0 18 18" className="h-[18px] w-[18px]" fill="none" stroke="#fff" strokeWidth="1.300"><path d="M5 6h11v8H5zM17 8v4M1 3h6M2 3v4h4V3M4 7v4" /><path d="M7 8h6v4H7z" fill="#fff" /></svg> },
  { name: "声音", icon: <Volume2 className="h-[18px] w-[18px]" strokeWidth={1.500} /> },
];

function Taskbar() {
  return (
    <footer className="flex h-8 shrink-0 overflow-hidden bg-[#050505] text-white">
      <label className="flex w-[324px] shrink-0 items-center bg-[#f1f1f1] pb-[6px]">
        <svg viewBox="0 0 10 22" className="h-[22px] w-[10px]" fill="none"><circle cx="0" cy="11" r="8.500" stroke="#111" strokeWidth="3" /></svg>
        <input aria-label="搜索" placeholder="搜索应用、文档、网页等" className="ml-[10px] w-[262px] bg-transparent text-sm outline-none placeholder:text-[#333]" />
        <Mic className="ml-3 h-[18px] w-[18px] text-[#222]" strokeWidth={1.400} />
      </label>
      <button aria-label="任务视图" className="flex w-[50px] shrink-0 items-center justify-center pb-2">
        <svg viewBox="0 0 18 16" className="h-4 w-[18px]" fill="none" stroke="#fff" strokeWidth="1.300">
          <path d="M1 1v2h10V1M1 15v-2h10v2M2 5h8v6H2zM15 1v3M15 8v7M14 5h3v2h-3z" />
        </svg>
      </button>
      {APPS.map((a) => (
        <button key={a.name} aria-label={a.name} className={`flex w-[49px] shrink-0 flex-col items-center ${a.active ? "bg-[#333436]" : ""}`}>
          <span className="flex flex-1 items-center pb-[6px]">{a.icon}</span>
          <span className={`h-[2px] bg-[#7db1e8] ${a.active ? "w-full" : "w-10"}`} />
        </button>
      ))}
      <div className="flex-1" />
      <div className="flex shrink-0 items-center pb-2">
        <button aria-label="搜狗输入法"><SogouLogo size="h-[18px] w-[18px]" /></button>
        <button aria-label="联系人" className="ml-[42px]"><Users className="h-4 w-4" strokeWidth={1.500} /></button>
        <button aria-label="展开托盘" className="mr-2 ml-5"><ChevronUp className="h-4 w-4" strokeWidth={1.800} /></button>
      </div>
      <div className="mr-[10px] flex shrink-0 items-center gap-[6px] pb-2">
        {TRAY.map((t) => <button key={t.name} aria-label={t.name}>{t.icon}</button>)}
      </div>
      <time className="-mt-[5px] block shrink-0 text-center font-['Noto_Sans','Noto_Sans_CJK_SC',sans-serif] text-xs leading-4 whitespace-nowrap">
        22:31 周一<br />2021/5/24
      </time>
      <button aria-label="通知" className="ml-5 flex w-[10px] shrink-0 items-center overflow-hidden pb-1">
        <svg viewBox="0 0 18 18" className="h-[18px] w-[18px] shrink-0"><path d="M1 2h16v12h-5v3l-4-3H1z" fill="#fff" /><path d="M4 6h10M4 10h10" stroke="#111" /><circle cx="13" cy="14" r="4" fill="#d22" /></svg>
      </button>
    </footer>
  );
}

export default function App() {
  return (
    <div className="flex h-screen min-h-[600px] flex-col overflow-hidden bg-[#6b6c6d] font-['Open_Sans','Noto_Sans_CJK_SC',sans-serif]">
      <TitleBar />
      <Ribbon />
      <div className="flex min-h-0 flex-1">
        <PropertyPanel />
        <ModelCanvas />
      </div>
      <div className="relative shrink-0">
        <BottomArea />
        <Watermark />
      </div>
      <Taskbar />
    </div>
  );
}
